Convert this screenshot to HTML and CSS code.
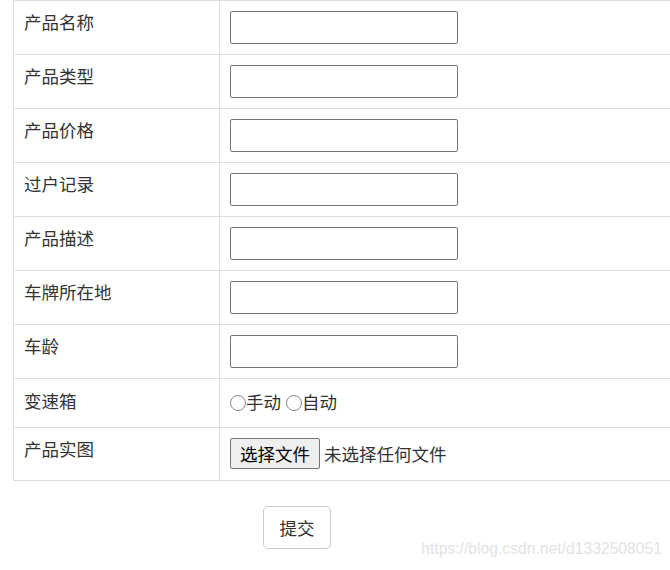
FILE: index.html
```html
<!DOCTYPE html>
<html lang="zh-CN">
<head>
  <meta charset="UTF-8" />
  <meta name="viewport" content="width=device-width, initial-scale=1" />
  <title>发布产品</title>
  <link rel="stylesheet" href="styles.css">
</head>
<body>

  <form class="product-form">
    <table class="form-table">
      <tr>
        <td>产品名称</td>
        <td><input type="text" class="field"></td>
      </tr>
      <tr>
        <td>产品类型</td>
        <td><input type="text" class="field"></td>
      </tr>
      <tr>
        <td>产品价格</td>
        <td><input type="text" class="field"></td>
      </tr>
      <tr>
        <td>过户记录</td>
        <td><input type="text" class="field"></td>
      </tr>
      <tr>
        <td>产品描述</td>
        <td><input type="text" class="field"></td>
      </tr>
      <tr>
        <td>车牌所在地</td>
        <td><input type="text" class="field"></td>
      </tr>
      <tr>
        <td>车龄</td>
        <td><input type="text" class="field"></td>
      </tr>
      <tr class="radio-row">
        <td>变速箱</td>
        <td>
          <label><input type="radio" name="gear" class="radio">手动</label>
          <label><input type="radio" name="gear" class="radio">自动</label>
        </td>
      </tr>
      <tr class="file-row">
        <td>产品实图</td>
        <td>
          <span class="file-picker">
            <button type="button" class="file-btn">选择文件</button>
            <span class="file-name">未选择任何文件</span>
          </span>
        </td>
      </tr>
    </table>

    <button type="submit" class="submit-btn">提交</button>
  </form>

  <div class="watermark">https://blog.csdn.net/d1332508051</div>

</body>
</html>
```

FILE: styles.css
```css
* {
  box-sizing: border-box;
}

html, body {
  margin: 0;
  padding: 0;
}

body {
  width: 670px;
  height: 570px;
  overflow: hidden;
  position: relative;
  font-family: "Noto Sans CJK SC", "Liberation Sans", sans-serif;
  font-size: 17.5px;
  line-height: 25px;
  color: #333;
  background: #fff;
}

.product-form {
  padding-left: 13px;
}

/* the table runs past the right edge of the window, as in the original */
.form-table {
  border-collapse: collapse;
  width: 700px;
}

.form-table td {
  border: 1px solid #ddd;
  padding: 10px;
  vertical-align: top;
}

.form-table td:first-child {
  width: 206px;
  padding: 8px 10px 12px;
}

.field {
  display: block;
  width: 228px;
  height: 33px;
  margin: 0;
  border: 1px solid #767676;
  border-radius: 2px;
  background: #fff;
}

.radio-row td {
  line-height: 28px;
}

.radio-row td:last-child {
  padding: 9px 10px 11px;
}

.radio-row label {
  margin-right: 1px;
}

.radio {
  appearance: none;
  -webkit-appearance: none;
  width: 16px;
  height: 16px;
  margin: 0;
  border: 1px solid #8a8a8a;
  border-radius: 50%;
  vertical-align: -2px;
}

.file-row td:last-child {
  padding: 10px 10px 11px;
}

.file-picker {
  display: flex;
  align-items: center;
  gap: 4px;
}

.file-btn {
  height: 31px;
  padding: 0 9px;
  font-family: inherit;
  font-size: 17.5px;
  line-height: 25px;
  color: #000;
  background: #efefef;
  border: 1px solid #767676;
  border-radius: 2px;
}

.file-name {
  color: #333;
}

.submit-btn {
  display: block;
  margin: 25px 0 0 250px;
  width: 68px;
  height: 43px;
  padding: 0;
  font-family: inherit;
  font-size: 17.5px;
  color: #333;
  background: #fff;
  border: 1px solid #ccc;
  border-radius: 5px;
}

.watermark {
  position: absolute;
  right: 8px;
  bottom: 9px;
  font-family: "Liberation Sans", sans-serif;
  font-size: 15.7px;
  color: #e3e3e3;
}
```
